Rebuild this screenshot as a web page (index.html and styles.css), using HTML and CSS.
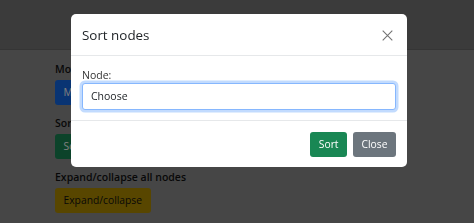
FILE: index.html
```html
<!DOCTYPE html>
<html lang="en">
<head>
  <meta charset="UTF-8" />
  <meta name="viewport" content="width=device-width, initial-scale=1.0"/>
  <title>Sort nodes</title>
  <link rel="stylesheet" href="styles.css">
</head>
<body>

<header class="topbar"></header>

<main class="page">
  <div class="group">
    <label>Move node</label>
    <button class="btn primary">Move</button>
  </div>
  <div class="group">
    <label>Sort nodes</label>
    <button class="btn success">Sort</button>
  </div>
  <div class="group">
    <label>Expand/collapse all nodes</label>
    <button class="btn warning">Expand/collapse</button>
  </div>
</main>

<div class="backdrop">
  <div class="modal">
    <div class="modal-header">
      <div class="modal-title">Sort nodes</div>
      <button class="btn-close" aria-label="Close">
        <svg viewBox="0 0 16 16" width="11" height="11">
          <path d="M1 1L15 15M15 1L1 15" stroke="#000" stroke-width="1.6" fill="none"/>
        </svg>
      </button>
    </div>
    <div class="modal-body">
      <label for="node">Node:</label>
      <input id="node" class="form-control" type="text" value="Choose" />
    </div>
    <div class="modal-footer">
      <button class="btn success">Sort</button>
      <button class="btn secondary">Close</button>
    </div>
  </div>
</div>

</body>
</html>
```

FILE: styles.css
```css
body {
  margin: 0;
  font-family: "Open Sans", "Noto Sans", sans-serif;
  font-size: 10.5px;
  line-height: 16px;
  color: #111;
  background: #8c8c8c;
  height: 223px;
  overflow: hidden;
}
.topbar {
  height: 49px;
  background: #767676;
  border-bottom: 1px solid #6a6a6a;
}
.page {
  padding: 11px 55px 0;
}
.group {
  display: flex;
  flex-direction: column;
  align-items: flex-start;
  margin-bottom: 10px;
}
.group label {
  font-weight: 600;
  margin-bottom: 3px;
}
.btn {
  font-family: inherit;
  font-size: 10.3px;
  line-height: 15px;
  padding: 4px 7.5px;
  border: 1px solid transparent;
  border-radius: 3px;
  color: #fff;
  cursor: pointer;
}
.primary { background: #1368e6; }
.success { background: #198754; }
.warning { background: #b08c00; color: #111; }
.secondary { background: #6c757d; }

.backdrop {
  position: fixed;
  inset: 0;
  background: rgba(0,0,0,0.5);
  display: flex;
  justify-content: center;
  align-items: flex-start;
  padding-left: 4px;
}
.modal {
  width: 336px;
  margin-top: 14px;
  background: #fff;
  border-radius: 5px;
  overflow: hidden;
}
.modal-header {
  display: flex;
  align-items: center;
  justify-content: space-between;
  padding: 11px 11px 10px;
  border-bottom: 1px solid #e6e8ea;
}
.modal-title {
  font-size: 13.4px;
  line-height: 20px;
  font-weight: 500;
  color: #212529;
}
.btn-close {
  background: none;
  border: none;
  padding: 3px;
  opacity: 0.55;
  display: flex;
  cursor: pointer;
}
.modal-body {
  padding: 13px 11px 10px;
  display: flex;
  flex-direction: column;
}
.modal-body label {
  line-height: 13px;
  margin-bottom: 1px;
  color: #333;
}
.form-control {
  font-family: inherit;
  font-size: 10.5px;
  line-height: 17px;
  padding: 4px 8px;
  border: 1px solid #86b7fe;
  border-radius: 3px;
  box-shadow: 0 0 0 2.5px rgba(13,110,253,0.25);
  color: #212529;
  outline: none;
}
.modal-footer {
  display: flex;
  justify-content: flex-end;
  gap: 6px;
  padding: 11px 11px 10px;
  border-top: 1px solid #e6e8ea;
}
```
